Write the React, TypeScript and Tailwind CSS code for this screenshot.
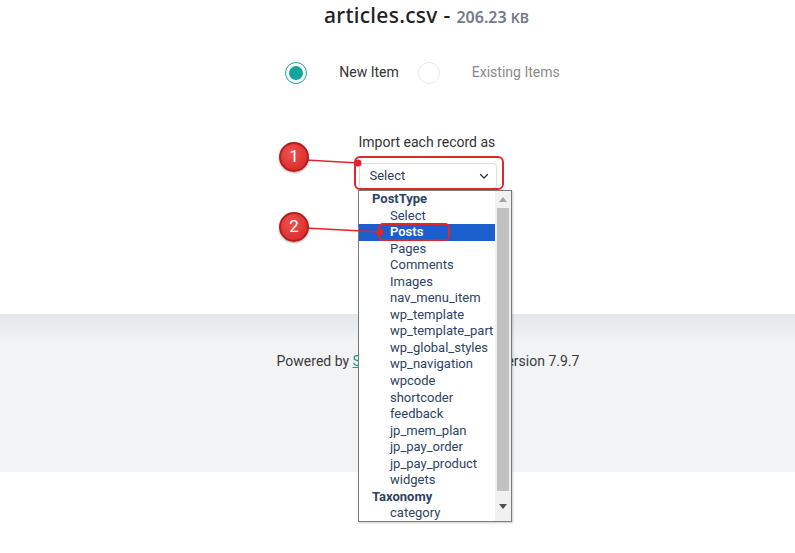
import React from "react";

const groups: { label: string; items: string[] }[] = [
  {
    label: "PostType",
    items: [
      "Select",
      "Posts",
      "Pages",
      "Comments",
      "Images",
      "nav_menu_item",
      "wp_template",
      "wp_template_part",
      "wp_global_styles",
      "wp_navigation",
      "wpcode",
      "shortcoder",
      "feedback",
      "jp_mem_plan",
      "jp_pay_order",
      "jp_pay_product",
      "widgets",
    ],
  },
  { label: "Taxonomy", items: ["category"] },
];

function Marker({ n, x, y }: { n: number; x: number; y: number }) {
  return (
    <div
      className="absolute w-[30px] h-[30px] rounded-full border-2 border-[#b71c1c] bg-[radial-gradient(circle_at_40%_35%,#f0524f,#d32222)] text-white text-[17px] flex items-center justify-center shadow-[0_1px_2px_rgba(0,0,0,0.35)]"
      style={{ left: x - 15, top: y - 15, fontFamily: "Roboto, sans-serif" }}
    >
      {n}
    </div>
  );
}

export default function App() {
  return (
    <div className="relative w-[795px] h-[553px] overflow-hidden bg-white" style={{ fontFamily: "Roboto, 'Liberation Sans', sans-serif" }}>
      {/* Top panel */}
      <div className="h-[314px] flex flex-col items-center pl-[62px]">
        <div className="flex items-baseline gap-[6px] -ml-[4px]">
          <span className="text-[21px] font-medium text-[#222] tracking-[0.3px]" style={{ fontFamily: "'Noto Sans', sans-serif" }}>
            articles.csv -
          </span>
          <span className="text-[16px] font-semibold text-[#6f7b8a]" style={{ fontFamily: "'Noto Sans', sans-serif" }}>
            206.23 <span className="text-[14px]">KB</span>
          </span>
        </div>

        <div className="mt-[30px] flex items-center ml-[-12px]">
          <div className="w-[22px] h-[22px] rounded-full border-[1.5px] border-[#14a49a] flex items-center justify-center">
            <div className="w-[14px] h-[14px] rounded-full bg-[#14a49a]" />
          </div>
          <span className="ml-[32px] text-[14px] text-[#333]">New Item</span>
          <div className="ml-[19px] w-[22px] h-[22px] rounded-full border border-[#e8e8e8]" />
          <span className="ml-[32px] text-[14px] text-[#8a8a8a]">Existing Items</span>
        </div>

        <div className="mt-[48px] flex flex-col items-start -ml-[2px]">
          <span className="text-[14px] text-[#333]">Import each record as</span>
          <div className="mt-[10px] w-[138px] h-[26px] rounded-[4px] border border-[#dcdcdc] flex items-center justify-between pl-[10px] pr-[6px]">
            <span className="text-[13px] text-[#2c3e5a]">Select</span>
            <svg width="12" height="12" viewBox="0 0 12 12" fill="none">
              <path d="M2.5 4.5L6 8l3.5-3.5" stroke="#333" strokeWidth="1.3" strokeLinecap="round" strokeLinejoin="round" />
            </svg>
          </div>
        </div>
      </div>

      {/* Footer band */}
      <div className="h-[158px] bg-[#f1f3f5] bg-[linear-gradient(#e3e7eb,#f1f3f5_28px)] flex justify-center pt-[37px] pl-[61px]">
        <span className="text-[14px] text-[#3a3a3a]">
          Powered by <span className="text-[#1a9a8c] underline">Smackcoders</span> | Plugin - Version 7.9.7
        </span>
      </div>

      {/* Dropdown list */}
      <div className="absolute left-[358px] top-[190px] w-[154px] h-[332px] border border-[#7a7a7a] bg-white flex shadow-[1px_1px_2px_rgba(0,0,0,0.2)]">
        <div className="flex-1 text-[13px] leading-[16.55px] text-[#2c4463]">
          {groups.map((g) => (
            <div key={g.label}>
              <div className="pl-[13px] font-bold">{g.label}</div>
              {g.items.map((it) =>
                it === "Posts" ? (
                  <div key={it} className="pl-[31px] bg-[#1a5fcc] text-white font-semibold">
                    {it}
                  </div>
                ) : (
                  <div key={it} className="pl-[31px]">
                    {it}
                  </div>
                )
              )}
            </div>
          ))}
        </div>
        <div className="w-[16px] bg-[#f1f1f1] flex flex-col items-center">
          <div className="h-[17px] flex items-center justify-center">
            <svg width="8" height="5" viewBox="0 0 8 5">
              <path d="M0 5L4 0l4 5z" fill="#a3a3a3" />
            </svg>
          </div>
          <div className="w-[12px] h-[283px] bg-[#c1c1c1]" />
          <div className="flex-1 flex items-center justify-center">
            <svg width="8" height="5" viewBox="0 0 8 5">
              <path d="M0 0l4 5 4-5z" fill="#505050" />
            </svg>
          </div>
        </div>
      </div>

      {/* Annotations */}
      <div className="absolute left-[354px] top-[156px] w-[150px] h-[34px] rounded-[6px] border-2 border-[#e0252b]" />
      <div className="absolute left-[378px] top-[223px] w-[72px] h-[18px] rounded-[5px] border-2 border-[#e0252b]" />
      <svg className="absolute left-0 top-0" width="795" height="553" viewBox="0 0 795 553">
        <line x1="306" y1="160" x2="358" y2="163" stroke="#e0252b" strokeWidth="1.6" />
        <circle cx="358" cy="163" r="3.5" fill="#e0252b" />
        <line x1="306" y1="228" x2="380" y2="232" stroke="#e0252b" strokeWidth="1.6" />
        <circle cx="380" cy="232" r="3.5" fill="#e0252b" />
      </svg>
      <Marker n={1} x={294} y={157} />
      <Marker n={2} x={294} y={227} />
    </div>
  );
}
